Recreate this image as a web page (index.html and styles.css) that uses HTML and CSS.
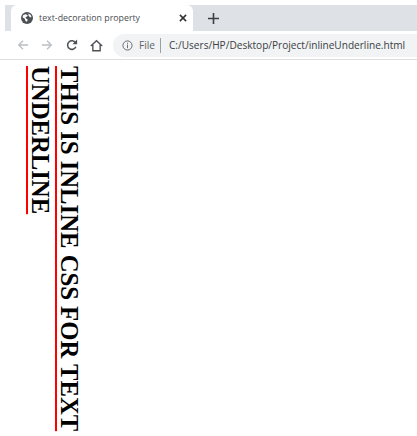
FILE: index.html
```html
<!DOCTYPE html>
<html lang="en">

<head>
    <meta charset="UTF-8">
    <title>text-decoration property</title>
    <link rel="stylesheet" href="styles.css">
</head>

<body>
    <div class="tabstrip">
        <div class="tab">
            <svg class="globe" width="12" height="12" viewBox="0 0 16 16">
                <circle cx="8" cy="8" r="8" fill="#4d5156" />
                <path d="M3 4l3-1 3 1-1 2-2 1 1 2 2 1-1 3-2-1-1-3-3-2zM10 2l3 2 1 3-2 0-2-2z" fill="#fff" />
            </svg>
            <span class="tab-title">text-decoration property</span>
            <svg class="tab-close" width="8" height="8" viewBox="0 0 9 9">
                <path d="M1 1l7 7M8 1l-7 7" stroke="#333" stroke-width="1.7" />
            </svg>
        </div>
        <svg class="new-tab" width="11" height="11" viewBox="0 0 11 11">
            <path d="M5.5 0v11M0 5.5h11" stroke="#3c4043" stroke-width="1.6" />
        </svg>
    </div>

    <div class="toolbar">
        <svg class="back" width="12" height="12" viewBox="0 0 14 14" fill="none" stroke="#bcc0c4" stroke-width="1.6">
            <path d="M13 7H2M7 2L2 7l5 5" />
        </svg>
        <svg class="forward" width="12" height="12" viewBox="0 0 14 14" fill="none" stroke="#bcc0c4" stroke-width="1.6">
            <path d="M1 7h11M7 2l5 5-5 5" />
        </svg>
        <svg class="reload" width="12" height="12" viewBox="0 0 14 14" fill="none" stroke="#4d5156" stroke-width="1.8">
            <path d="M11.5 9a5 5 0 1 1-.4-4.6" />
            <path d="M13 0.5v5.5H7.5z" fill="#4d5156" stroke="none" />
        </svg>
        <svg class="home" width="13" height="13" viewBox="0 0 16 15" fill="none" stroke="#4d5156" stroke-width="1.7">
            <path d="M1 8l7-6.5L15 8M3.5 6.5V14h9V6.5" />
        </svg>
        <div class="omnibox">
            <svg width="11" height="11" viewBox="0 0 12 12" fill="none" stroke="#5f6368">
                <circle cx="6" cy="6" r="5" />
                <path d="M6 5v4M6 3v1.2" />
            </svg>
            <span class="scheme">File</span>
            <span class="divider"></span>
            <span class="url">C:/Users/HP/Desktop/Project/inlineUnderline.html</span>
        </div>
    </div>

    <main class="content">
        <span class="inline-text">THIS IS INLINE CSS FOR TEXT UNDERLINE</span>
    </main>
</body>

</html>
```

FILE: styles.css
```css
* {
    margin: 0px;
    padding: 0px;
    box-sizing: border-box;
}

html,
body {
    height: 436px;
    overflow: hidden;
    background-color: white;
}

body {
    font-family: "Open Sans", "Noto Sans", sans-serif;
    padding-top: 5px;
}

.tabstrip {
    height: 26px;
    margin-left: 5px;
    padding-left: 6px;
    background-color: #dee1e6;
    display: flex;
    align-items: center;
}

.tab {
    width: 182px;
    height: 26px;
    padding-left: 10px;
    padding-right: 6px;
    background-color: white;
    display: flex;
    align-items: center;
    border-radius: 6px 6px 0 0;
}

.tab-title {
    margin-left: 6px;
    font-size: 8.8px;
    color: #4a4d52;
    white-space: nowrap;
    flex: 1;
}

.new-tab {
    margin-left: 15px;
}

.toolbar {
    height: 29px;
    padding-left: 17px;
    border-bottom: 1px solid #dcdee0;
    display: flex;
    align-items: center;
}

.forward {
    margin-left: 12px;
}

.reload {
    margin-left: 13px;
}

.home {
    margin-left: 12px;
}

.omnibox {
    flex: 1;
    height: 23px;
    margin-left: 10px;
    padding-left: 9px;
    background-color: #f1f3f4;
    border-radius: 12px 0 0 12px;
    display: flex;
    align-items: center;
    font-size: 10.1px;
    white-space: nowrap;
    overflow: hidden;
}

.scheme {
    margin-left: 6px;
    color: #5f6368;
}

.divider {
    width: 1px;
    height: 15px;
    margin-left: 5px;
    margin-right: 8px;
    background-color: #9aa0a6;
}

.url {
    color: #3c4043;
}

.content {
    height: 376px;
    padding-top: 6px;
    padding-left: 26px;
    writing-mode: vertical-rl;
    overflow: hidden;
}

.inline-text {
    font-family: "Liberation Serif", serif;
    font-size: 24.7px;
    font-weight: bold;
    line-height: 29px;
    color: black;
    text-decoration: underline red 2px;
    text-underline-offset: 0px;
}
```
